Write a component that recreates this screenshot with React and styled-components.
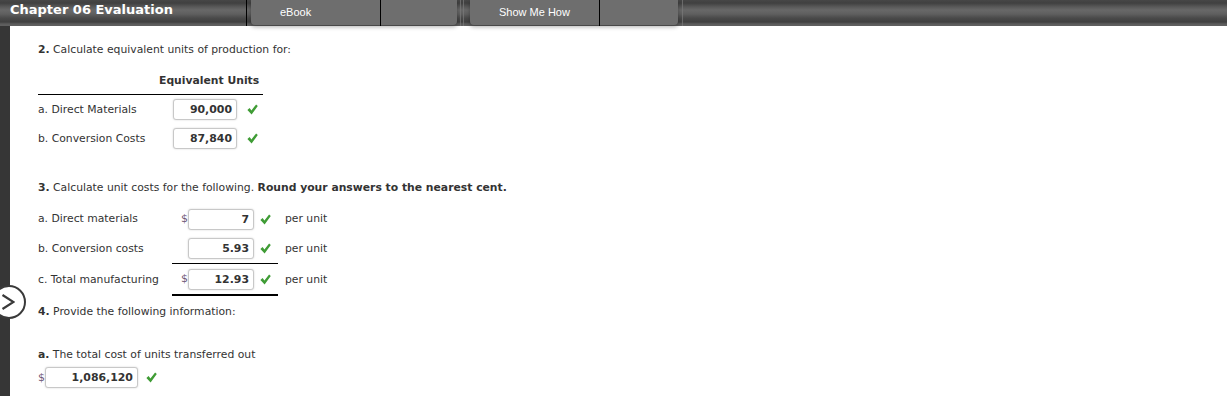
import React from "react";
import styled, { createGlobalStyle } from "styled-components";

const Global = createGlobalStyle`
  html, body { margin: 0; padding: 0; background: #fff; }
  body { font-family: "DejaVu Sans", Verdana, sans-serif; color: #333; }
`;

const Page = styled.div`
  width: 1227px;
  height: 396px;
  overflow: hidden;
  display: flex;
  flex-direction: column;
  position: relative;
`;

const headerGradient = `linear-gradient(to bottom, #474747 0px, #404040 3px, #5a5a5a 7px, #686868 10px, #5f5f5f 14px, #4a4a4a 18px, #404040 22px, #5c5c5c 24px, #606060 26px)`;

const Header = styled.div`
  height: 26px;
  display: flex;
  align-items: flex-start;
  background: ${headerGradient};
  position: relative;
  z-index: 2;
`;

const TitleCell = styled.div`
  width: 236px;
  height: 26px;
  padding-left: 10px;
  border-right: 1px solid #000;
  color: #fff;
  font-family: "DejaVu Sans", Verdana, sans-serif;
  font-weight: bold;
  font-size: 13px;
  line-height: 19px;
  box-sizing: content-box;
`;

const Tab = styled.div`
  margin-left: ${(p) => p.$ml}px;
  height: 25px;
  display: flex;
  background: #6e6e6e;
  border-radius: 0 0 4px 4px;
  box-shadow: 0 2px 4px rgba(0, 0, 0, 0.3);
`;

const TabCell = styled.div`
  width: ${(p) => p.$w}px;
  height: 26px;
  padding-left: ${(p) => p.$pl || 0}px;
  box-sizing: border-box;
  border-right: ${(p) => (p.$divider ? "1px solid #000" : "none")};
  color: #fff;
  font-family: "Liberation Sans", Arial, sans-serif;
  font-size: 11px;
  line-height: 25px;
`;

const Rule = styled.div`
  margin-left: ${(p) => p.$ml}px;
  width: 1px;
  height: 26px;
  background: #7a7a7a;
  opacity: 0.7;
`;

const Body = styled.div`
  flex: 1;
  display: flex;
`;

const LeftBar = styled.div`
  width: 10px;
  background: #363636;
  flex: none;
`;

const Main = styled.div`
  padding-left: 28px;
  padding-top: 17px;
  font-size: 10.8px;
  line-height: 14px;
  color: #333;
`;

const Para = styled.div`
  margin-top: ${(p) => p.$mt || 0}px;
  white-space: nowrap;
`;

const B = styled.b`
  font-weight: bold;
`;

const EqTable = styled.div`
  margin-top: 17px;
  width: 225px;
`;

const EqHead = styled.div`
  height: 20px;
  border-bottom: 1px solid #000;
  font-weight: bold;
  padding-left: 121px;
  line-height: 14px;
  box-sizing: content-box;
`;

const EqRow = styled.div`
  height: 29px;
  display: flex;
  align-items: center;
`;

const RowLabel = styled.div`
  width: ${(p) => p.$w}px;
  flex: none;
  white-space: nowrap;
`;

const Input = styled.div`
  width: ${(p) => p.$w}px;
  height: 21px;
  box-sizing: border-box;
  border: 1px solid #c8c8c8;
  border-radius: 3px;
  box-shadow: 0 0 2px rgba(0, 0, 0, 0.18);
  background: #fff;
  text-align: right;
  padding-right: 4px;
  font-weight: bold;
  font-size: 10.9px;
  line-height: 19px;
  color: #333;
  flex: none;
`;

const CheckWrap = styled.span`
  display: inline-flex;
  margin-left: ${(p) => p.$ml}px;
`;

function Check({ ml = 10 }) {
  return (
    <CheckWrap $ml={ml}>
      <svg width="11" height="11" viewBox="0 0 11 11">
        <path d="M0.4 6 L2.6 4.1 L4.4 6.5 L9.1 0.4 L10.8 1.9 L4.6 10.6 Z" fill="#3f9c35" />
      </svg>
    </CheckWrap>
  );
}

const CostRow = styled.div`
  height: ${(p) => p.$h}px;
  display: flex;
  align-items: stretch;
`;

const Cell = styled.div`
  width: ${(p) => p.$w}px;
  flex: none;
  display: flex;
  align-items: center;
  justify-content: ${(p) => p.$j || "flex-start"};
  padding-left: ${(p) => p.$pl || 0}px;
  padding-right: ${(p) => p.$pr || 0}px;
  box-sizing: border-box;
  white-space: nowrap;
  border-bottom: ${(p) => p.$bb || "none"};
`;

const Dollar = styled.span`
  color: #6f5a78;
  font-size: 10.9px;
`;

const Sign = styled.div`
  display: flex;
  align-items: center;
  margin-top: 5px;
  height: 21px;
`;

const Circle = styled.div`
  position: absolute;
  left: -8px;
  top: 285px;
  width: 30px;
  height: 30px;
  border: 2px solid #3a3a3a;
  border-radius: 50%;
  background: #fff;
  display: flex;
  align-items: center;
  justify-content: center;
  z-index: 3;
`;

function Chevron() {
  return (
    <svg width="14" height="18" viewBox="0 0 14 18" style={{ marginLeft: -2 }}>
      <path d="M1.5 2 L12.5 9 L1.5 16" fill="none" stroke="#3a3a3a" strokeWidth="2.2" />
    </svg>
  );
}

const costRows = [
  { label: "a. Direct materials", dollar: true, value: "7", h: 30, bb: "none" },
  { label: "b. Conversion costs", dollar: false, value: "5.93", h: 30, bb: "1px solid #000" },
  { label: "c. Total manufacturing", dollar: true, value: "12.93", h: 32, bb: "2px solid #000" },
];

export default function App() {
  return (
    <Page>
      <Global />
      <Header>
        <TitleCell>Chapter 06 Evaluation</TitleCell>
        <Tab $ml={4}>
          <TabCell $w={130} $pl={29} $divider>eBook</TabCell>
          <TabCell $w={76} />
        </Tab>
        <Rule $ml={3} />
        <Rule $ml={2} />
        <Tab $ml={6}>
          <TabCell $w={130} $pl={29} $divider>Show Me How</TabCell>
          <TabCell $w={78} />
        </Tab>
        <Rule $ml={4} />
      </Header>
      <Body>
        <LeftBar />
        <Main>
          <Para>
            <B>2.</B> Calculate equivalent units of production for:
          </Para>
          <EqTable>
            <EqHead>Equivalent Units</EqHead>
            <EqRow>
              <RowLabel $w={135}>a. Direct Materials</RowLabel>
              <Input $w={64}>90,000</Input>
              <Check ml={10} />
            </EqRow>
            <EqRow>
              <RowLabel $w={135}>b. Conversion Costs</RowLabel>
              <Input $w={64}>87,840</Input>
              <Check ml={10} />
            </EqRow>
          </EqTable>
          <Para $mt={28}>
            <B>3.</B> Calculate unit costs for the following.{" "}
            <B>Round your answers to the nearest cent.</B>
          </Para>
          <div style={{ marginTop: 9 }}>
            {costRows.map((r) => (
              <CostRow key={r.label} $h={r.h}>
                <Cell $w={134}>{r.label}</Cell>
                <Cell $w={16} $bb={r.bb} $pl={9}>
                  {r.dollar && <Dollar>$</Dollar>}
                </Cell>
                <Cell $w={90} $bb={r.bb}>
                  <Input $w={66}>{r.value}</Input>
                  <Check ml={6} />
                </Cell>
                <Cell $w={60} $pl={7}>per unit</Cell>
              </CostRow>
            ))}
          </div>
          <Para $mt={9}>
            <B>4.</B> Provide the following information:
          </Para>
          <Para $mt={29}>
            <B>a.</B> The total cost of units transferred out
          </Para>
          <Sign>
            <Dollar>$</Dollar>
            <Input $w={93}>1,086,120</Input>
            <Check ml={8} />
          </Sign>
        </Main>
      </Body>
      <Circle>
        <Chevron />
      </Circle>
    </Page>
  );
}
